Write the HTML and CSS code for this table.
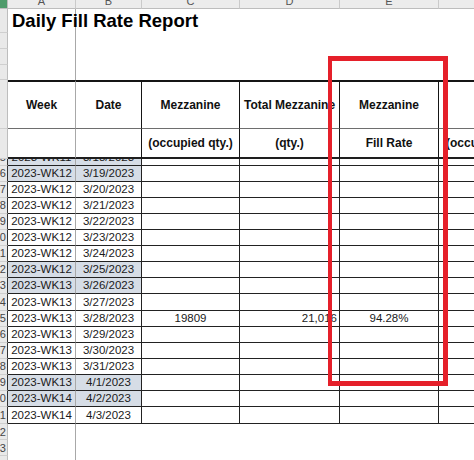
FILE: index.html
```html
<!DOCTYPE html>
<html>
<head>
<meta charset="utf-8">
<link rel="stylesheet" href="styles.css">
</head>
<body>
<div class="sheet">
  <div class="row colhead">
    <div class="corner"></div><div>A</div><div>B</div><div>C</div><div>D</div><div>E</div><div>F</div>
  </div>
  <div class="row top r1">
    <div class="rn"></div><div class="a title">Daily Fill Rate Report</div><div></div><div></div><div></div><div></div><div></div>
  </div>
  <div class="row top r2">
    <div class="rn"></div><div class="a"></div><div></div><div></div><div></div><div></div><div></div>
  </div>
  <div class="row top r3">
    <div class="rn"></div><div class="a"></div><div></div><div></div><div></div><div></div><div></div>
  </div>
  <div class="row top r4">
    <div class="rn"></div><div class="a"></div><div></div><div></div><div></div><div></div><div></div>
  </div>
  <div class="row hdr hdr1">
    <div class="rn"></div><div class="a">Week</div><div class="b">Date</div><div class="b">Mezzanine</div><div class="b">Total Mezzanine</div><div class="b">Mezzanine</div><div></div>
  </div>
  <div class="row hdr hdr2">
    <div class="rn"></div><div class="a"></div><div class="b"></div><div class="b">(occupied qty.)</div><div class="b">(qty.)</div><div class="b">Fill Rate</div><div class="f">(occupied qty.)</div>
  </div>
  <div class="clip">
    <div class="row data">
      <div class="rn">15</div><div class="a hl">2023-WK11</div><div class="b hl">3/18/2023</div><div class="b"></div><div class="b"></div><div class="b"></div><div></div>
    </div>
  </div>
  <div class="row data">
    <div class="rn">16</div><div class="a hl">2023-WK12</div><div class="b hl">3/19/2023</div><div class="b"></div><div class="b"></div><div class="b"></div><div></div>
  </div>
  <div class="row data">
    <div class="rn">17</div><div class="a">2023-WK12</div><div class="b">3/20/2023</div><div class="b"></div><div class="b"></div><div class="b"></div><div></div>
  </div>
  <div class="row data">
    <div class="rn">18</div><div class="a">2023-WK12</div><div class="b">3/21/2023</div><div class="b"></div><div class="b"></div><div class="b"></div><div></div>
  </div>
  <div class="row data">
    <div class="rn">19</div><div class="a">2023-WK12</div><div class="b">3/22/2023</div><div class="b"></div><div class="b"></div><div class="b"></div><div></div>
  </div>
  <div class="row data">
    <div class="rn">20</div><div class="a">2023-WK12</div><div class="b">3/23/2023</div><div class="b"></div><div class="b"></div><div class="b"></div><div></div>
  </div>
  <div class="row data">
    <div class="rn">21</div><div class="a">2023-WK12</div><div class="b">3/24/2023</div><div class="b"></div><div class="b"></div><div class="b"></div><div></div>
  </div>
  <div class="row data">
    <div class="rn">22</div><div class="a hl">2023-WK12</div><div class="b hl">3/25/2023</div><div class="b"></div><div class="b"></div><div class="b"></div><div></div>
  </div>
  <div class="row data">
    <div class="rn">23</div><div class="a hl">2023-WK13</div><div class="b hl">3/26/2023</div><div class="b"></div><div class="b"></div><div class="b"></div><div></div>
  </div>
  <div class="row data tall">
    <div class="rn">24</div><div class="a">2023-WK13</div><div class="b">3/27/2023</div><div class="b"></div><div class="b"></div><div class="b"></div><div></div>
  </div>
  <div class="row data">
    <div class="rn">25</div><div class="a">2023-WK13</div><div class="b">3/28/2023</div><div class="b">19809</div><div class="b num">21,016</div><div class="b">94.28%</div><div></div>
  </div>
  <div class="row data">
    <div class="rn">26</div><div class="a">2023-WK13</div><div class="b">3/29/2023</div><div class="b"></div><div class="b"></div><div class="b"></div><div></div>
  </div>
  <div class="row data">
    <div class="rn">27</div><div class="a">2023-WK13</div><div class="b">3/30/2023</div><div class="b"></div><div class="b"></div><div class="b"></div><div></div>
  </div>
  <div class="row data">
    <div class="rn">28</div><div class="a">2023-WK13</div><div class="b">3/31/2023</div><div class="b"></div><div class="b"></div><div class="b"></div><div></div>
  </div>
  <div class="row data">
    <div class="rn">29</div><div class="a hl">2023-WK13</div><div class="b hl">4/1/2023</div><div class="b"></div><div class="b"></div><div class="b"></div><div></div>
  </div>
  <div class="row data">
    <div class="rn">30</div><div class="a hl">2023-WK14</div><div class="b hl">4/2/2023</div><div class="b"></div><div class="b"></div><div class="b"></div><div></div>
  </div>
  <div class="row data tall">
    <div class="rn">31</div><div class="a">2023-WK14</div><div class="b">4/3/2023</div><div class="b"></div><div class="b"></div><div class="b"></div><div></div>
  </div>
  <div class="row blank">
    <div class="rn">32</div><div class="a"></div><div></div><div></div><div></div><div></div><div></div>
  </div>
  <div class="row blank">
    <div class="rn">33</div><div class="a"></div><div></div><div></div><div></div><div></div><div></div>
  </div>
  <div class="row blank">
    <div class="rn">34</div><div class="a"></div><div></div><div></div><div></div><div></div><div></div>
  </div>
  <div class="redbox"></div>
</div>
</body>
</html>
```
FILE: styles.css
```css
html, body {
  margin: 0;
  padding: 0;
  background: #fff;
  overflow: hidden;
}
body {
  font-family: "Liberation Sans", Arial, sans-serif;
  color: #1a1a1a;
}
.sheet {
  position: relative;
  width: 539px;
}
.row {
  display: grid;
  grid-template-columns: 8px 68px 66px 98px 100px 99px 100px;
  height: 16px;
  flex-shrink: 0;
}
.row > div {
  box-sizing: border-box;
  overflow: hidden;
  white-space: nowrap;
  display: flex;
  align-items: center;
  justify-content: center;
}
/* column letters */
.colhead {
  height: 9px;
  background: #ececec;
}
.colhead > div {
  border-bottom: 1px solid #bdbdbd;
  border-right: 1px solid #cacaca;
  align-items: flex-end;
  padding-bottom: 2px;
  font-size: 11px;
  line-height: 10px;
  color: #555;
}
.colhead > .corner {
  background: #4f9b6b;
  border-right: 1px solid #bdbdbd;
}
/* row numbers */
.row > .rn {
  background: #e9e9e9;
  border-right: 1px solid #bdbdbd;
  border-bottom: 1px solid #cfcfcf;
  justify-content: flex-end;
  padding-right: 1px;
  font-size: 11px;
  color: #444;
}
.row > .a {
  border-right: 1px solid #a8a8a8;
}
/* title area */
.r1 { height: 24px; }
.r2 { height: 16px; }
.r3 { height: 16px; }
.r4 { height: 15px; }
.row > .title {
  overflow: visible;
  justify-content: flex-start;
  align-items: flex-start;
  padding: 1px 0 0 4px;
  font-size: 18.5px;
  line-height: 21px;
  font-weight: bold;
  color: #000;
}
/* header rows */
.hdr1 { height: 49px; }
.hdr2 { height: 30px; }
.hdr > div {
  font-size: 12px;
  font-weight: bold;
  color: #111;
}
.hdr1 > div:not(.rn) {
  border-top: 2px solid #151515;
  border-bottom: 1px solid #6e6e6e;
}
.hdr2 > div:not(.rn) {
  border-bottom: 2px solid #1e1e1e;
}
.hdr > .b {
  border-right: 1px solid #151515;
}
.hdr > .f {
  justify-content: flex-start;
  padding-left: 7px;
}
/* partially scrolled row */
.clip {
  height: 7px;
  overflow: hidden;
  display: flex;
  flex-direction: column;
  justify-content: flex-end;
}
/* data rows */
.data > div {
  font-size: 11.5px;
  line-height: 15px;
}
.data > div:not(.rn) {
  border-bottom: 1px solid #222;
}
.data > .rn {
  border-right: 1px solid #333;
  font-size: 11px;
}
.data > .b {
  border-right: 1px solid #222;
}
.data > .hl {
  background: #d6dde6;
}
.data > .num {
  justify-content: flex-end;
  padding-right: 2px;
}
.tall { height: 17px; }
/* highlight box */
.redbox {
  position: absolute;
  left: 328px;
  top: 56px;
  width: 120px;
  height: 330px;
  box-sizing: border-box;
  border: 5px solid #e5202a;
  border-left-width: 4px;
}
```
